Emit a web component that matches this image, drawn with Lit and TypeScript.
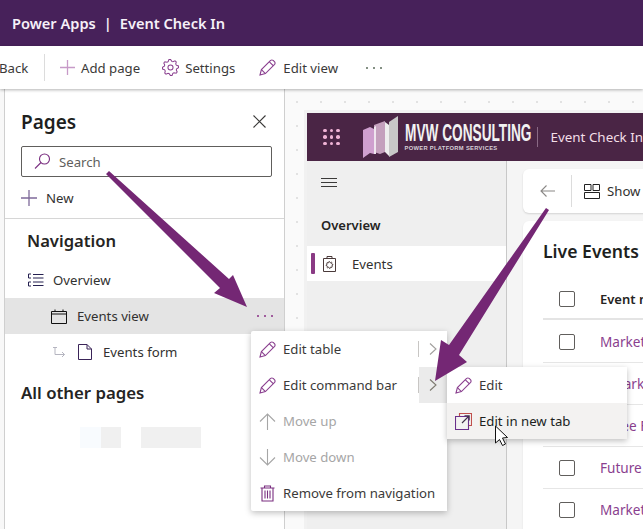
import { LitElement, html, css, svg } from "lit";
import { customElement } from "lit/decorators.js";

const P = "#8a3f8f";
const pencil = (c = P) => html`<svg class="ic" viewBox="0 0 17 17" fill="none" stroke=${c} stroke-width="1.1"><path d="M1 16 L2.4 10.6 L11.6 1.4 Q12.8 .5 14.2 1.4 L15.6 2.8 Q16.5 4.2 15.6 5.4 L6.4 14.6 Z"/><path d="M2.4 10.6 L6.4 14.6 M10.4 2.8 L14.2 6.6"/></svg>`;
const gearPath = (cx = 8, cy = 8, ro = 7.6, ri = 5.9) => {
  let d = "";
  const n = 8;
  for (let i = 0; i < n * 4; i++) {
    const a = (i / (n * 4)) * Math.PI * 2 - 0.19;
    const r = i % 4 < 2 ? ro : ri;
    d += `${i ? "L" : "M"}${(cx + r * Math.cos(a)).toFixed(2)} ${(cy + r * Math.sin(a)).toFixed(2)}`;
  }
  return d + "Z";
};
const chevron = (c: string) => html`<svg class="chev" viewBox="0 0 8 12" fill="none" stroke=${c} stroke-width="1.1"><path d="M1 .5 L7 6 L1 11.5"/></svg>`;
const arrowUp = html`<svg class="ic" viewBox="0 0 17 17" fill="none" stroke="#a6a6a6" stroke-width="1.1"><path d="M8.5 17 V1 M1 8.5 L8.5 1 L16 8.5"/></svg>`;
const arrowDown = html`<svg class="ic" viewBox="0 0 17 17" fill="none" stroke="#a6a6a6" stroke-width="1.1"><path d="M8.5 0 V16 M1 8.5 L8.5 16 L16 8.5"/></svg>`;
const trash = html`<svg class="ic" viewBox="0 0 17 17" fill="none" stroke="#7a2f80" stroke-width="1.1"><path d="M1.5 3 H15.5 M5.5 3 V1 H11.5 V3 M3 3 V16 H14 V3 M6 5.5 V13.5 M8.5 5.5 V13.5 M11 5.5 V13.5"/></svg>`;
const newTab = html`<svg class="ic" viewBox="0 0 17 17" fill="none" stroke-width="1.1"><path stroke="#c0504d" d="M4.5 3.5 V.5 H16.5 V12.5 H13.5"/><path stroke="#6a2f8a" d="M.5 3.5 H13.5 V16.5 H.5 Z"/><path stroke="#40304a" d="M7 10 L14 3 M9.5 2.8 H14.2 V7.5"/></svg>`;

const rows = ["Marketing", "1 Marketing", "Three Fe", "Future", "Marketing"];

@customElement("app-root")
export class AppRoot extends LitElement {
  static styles = css`
    :host { display: block; position: relative; width: 643px; height: 529px; overflow: hidden; background: #fff;
      font-family: "Noto Sans", "Open Sans", sans-serif; font-size: 13.2px; color: #323130; }
    svg { display: block; flex: none; }
    .ic { width: 17px; height: 17px; }
    .chev { width: 8px; height: 12px; }
    .top { height: 46px; background: #47215a; display: flex; align-items: center; padding-left: 12px; gap: 8px;
      color: #f6f0f8; font-weight: 600; font-size: 14.6px; white-space: pre; }
    .cmd { height: 43px; display: flex; align-items: center; position: relative; z-index: 2; background: #fff;
      box-shadow: 0 1px 3px rgba(0,0,0,.3); color: #3b3a39; }
    .cmd .back { width: 44px; height: 27px; display: flex; align-items: center; border-right: 1px solid #dcdcdc; text-indent: -1px; }
    .cmd .item { display: flex; align-items: center; gap: 6px; }
    .cmd .add { margin-left: 15px; }
    .cmd .set { margin-left: 22px; }
    .cmd .edit { margin-left: 24px; gap: 7px; }
    .cmd .more { margin-left: 28px; gap: 5px; }
    .cmd .more i { width: 2px; height: 2px; }
    .dots3 { display: flex; gap: 4.5px; }
    .dots3 i { width: 2.5px; height: 2.5px; border-radius: 50%; background: currentColor; }
    .body { height: 440px; display: flex; background: #f8f8f8; }
    .panel { width: 279px; margin-left: 4px; border-left: 1px solid #cfcfcf; border-right: 1px solid #cfcfcf; background: #fff; display: flex; flex-direction: column; flex: none; }
    .phead { height: 57px; padding: 8px 18px 0 16px; display: flex; align-items: center; justify-content: space-between; box-sizing: border-box; }
    .phead b { font-size: 19px; font-weight: 600; color: #201f1e; }
    .search { margin: 0 12px 0 16px; height: 31px; box-sizing: border-box; border: 1px solid #605e5c; border-radius: 2px; display: flex; align-items: center; padding-left: 12px; gap: 8px; color: #605e5c; }
    .new { height: 41px; padding-left: 16px; display: flex; align-items: center; gap: 9px; border-bottom: 1px solid #d6d6d6; color: #323130; }
    .sect { height: 42px; display: flex; align-items: center; font-size: 16.6px; font-weight: 600; color: #252423; padding-left: 22px; }
    .sect.other { height: 44px; padding-left: 16px; font-size: 16.8px; }
    .nrow { height: 36px; display: flex; align-items: center; box-sizing: border-box; color: #323130; }
    .nrow.a { padding-left: 23px; margin-top: 1px; gap: 9px; }
    .nrow.b { padding-left: 46px; gap: 10px; background: #e4e4e4; padding-right: 11px; }
    .nrow.b .dots3 { margin-left: auto; color: #8a2f86; }
    .nrow.c { padding-left: 48px; gap: 13px; }
    .nrow.c span { margin-left: -2px; }
    .blur { display: flex; padding: 13px 0 0 75px; gap: 20px; }
    .blur i { display: block; height: 21px; }
    .blur .x { width: 41px; background: linear-gradient(90deg, #f8fbfe 50%, #f0f0f0 50%); }
    .blur .y { width: 60px; background: #f0f0f0; }
    .canvas { flex: 1; min-width: 0; padding: 21px 0 0 19px; overflow: hidden;
      background-color: #fafafa; background-image: radial-gradient(#e2e2e2 1px, transparent 1.2px); background-size: 24px 24px; background-position: 0px 1px; }
    .frame { border: 3px solid #f1f1f1; border-right: none; border-bottom: none; height: 430px; display: flex; flex-direction: column; width: 340px; }
    .ahead { height: 48px; flex: none; background: #4a2545; display: flex; align-items: center; padding-left: 16px; color: #f3dfe8; }
    .waffle { display: grid; grid-template-columns: repeat(3, 3.5px); gap: 3px; margin-right: 22px; }
    .waffle i { width: 3.5px; height: 3.5px; border-radius: 50%; background: #f0b4d6; }
    .mark { width: 36px; height: 42px; margin: -1px 7px 0 0; }
    .brand { display: flex; flex-direction: column; width: 128px; color: #f2f2f2; padding-top: 1px; }
    .brand b { font-family: "Liberation Sans", sans-serif; font-size: 23px; line-height: 22px; font-weight: 700; white-space: nowrap; transform: scaleX(.594); transform-origin: left; width: 128px; }
    .brand small { font-size: 5.8px; font-family: "Liberation Sans", sans-serif; font-weight: 700; letter-spacing: .3px; line-height: 9px; white-space: nowrap; color: #d8d0d8; }
    .sep { width: 1px; height: 20px; background: #8a6a85; margin: 0 13px 0 4px; flex: none; }
    .apptitle { font-size: 13.4px; white-space: nowrap; }
    .amain { flex: 1; display: flex; min-height: 0; }
    .anav { width: 199px; flex: none; background: #efefef; border-right: 1px solid #c8c8c8; box-sizing: content-box; }
    .burger { padding: 17px 0 0 14px; height: 20px; }
    .ov { padding: 18px 0 0 14px; font-weight: 600; height: 30px; color: #252423; font-size: 13px; }
    .evt { height: 35px; background: #fff; display: flex; align-items: center; position: relative; padding-left: 16px; gap: 16px; color: #323130; }
    .evt::before { content: ""; position: absolute; left: 4px; top: 7px; bottom: 7px; width: 4px; background: #8a3a84; border-radius: 1px; }
    .acontent { flex: 1; background: #f5f5f5; padding: 8px 0 0 16px; min-width: 0; display: flex; flex-direction: column; gap: 8px; }
    .tools { height: 44px; flex: none; background: #fff; border-radius: 6px 0 0 6px; display: flex; align-items: center; box-shadow: 0 1px 2px rgba(0,0,0,.14); white-space: nowrap; }
    .tools .bk { width: 48px; height: 32px; display: flex; align-items: center; justify-content: center; border-right: 1px solid #dcdcdc; }
    .tools .gr { margin: 0 7px 0 12px; }
    .card { flex: 1; background: #fff; border-radius: 6px 0 0 0; padding: 0 0 0 20px; box-shadow: 0 1px 2px rgba(0,0,0,.1); white-space: nowrap; overflow: hidden; }
    .card h2 { margin: 0; height: 56px; display: flex; align-items: center; font-size: 17.6px; font-weight: 600; color: #201f1e; padding-top: 3px; box-sizing: border-box; }
    .row { height: 42px; display: flex; align-items: center; border-bottom: 1px solid #e6e6e6; box-sizing: border-box; color: #8a3f8f; font-size: 13.6px; }
    .row.h { color: #252423; font-weight: 600; height: 43px; padding-top: 2px; margin-bottom: 1px; font-size: 13px; border-bottom: 2px solid #e4e4e4; }
    .box { width: 16px; height: 16px; border: 1px solid #605e5c; border-radius: 2px; box-sizing: border-box; margin: 0 25px 0 16px; flex: none; background: #fff; }
    .menu { position: absolute; background: #fff; box-shadow: 0 2px 6px rgba(0,0,0,.25); z-index: 5; }
    .m1 { left: 251px; top: 331px; width: 196px; border-radius: 2px 0 0 2px; }
    .m2 { left: 447px; top: 367px; width: 180px; }
    .mi { height: 36px; display: flex; align-items: center; padding-left: 8px; gap: 7px; color: #3b3a39; white-space: nowrap; position: relative; }
    .mi.off { color: #a6a6a6; }
    .mi.hov { background: #f3f2f1; color: #201f1e; }
    .split { position: absolute; left: 168px; top: 0; bottom: 0; width: 28px; display: flex; align-items: center; justify-content: center; box-sizing: border-box; }
    .split.on { background: #ebebeb; }
    .split::before { content: ""; position: absolute; left: -1px; top: 10px; bottom: 10px; width: 1px; background: #c8c6c4; }
    .over { position: absolute; inset: 0; width: 643px; height: 529px; z-index: 8; pointer-events: none; }
  `;

  render() {
    return html`
      <div class="top"><span>Power Apps</span><span>|</span><span>Event Check In</span></div>
      <div class="cmd">
        <div class="back">Back</div>
        <div class="item add"><svg width="15" height="15" viewBox="0 0 15 15" stroke="#c79ac8" stroke-width="1.3"><path d="M7.5 0 V15 M0 7.5 H15"/></svg>Add page</div>
        <div class="item set"><svg class="ic" viewBox="0 0 16 16" fill="none" stroke=${P} stroke-width=".95"><path d=${gearPath()}/><circle cx="8" cy="8" r="2.4"/></svg>Settings</div>
        <div class="item edit">${pencil()}Edit view</div>
        <div class="more dots3" style="color:#5b6b5b"><i></i><i></i><i></i></div>
      </div>
      <div class="body">
        <div class="panel">
          <div class="phead"><b>Pages</b><svg width="13" height="13" viewBox="0 0 13 13" stroke="#3b3a39" stroke-width="1.1"><path d="M.5 .5 L12.5 12.5 M12.5 .5 L.5 12.5"/></svg></div>
          <div class="search"><svg width="17" height="17" viewBox="0 0 17 17" fill="none" stroke="#7a2f80" stroke-width="1.1"><circle cx="10.5" cy="6" r="5"/><path d="M7 9.5 L1 15.5"/></svg>Search</div>
          <div class="new"><svg width="16" height="16" viewBox="0 0 16 16" stroke="#7f6a9a" stroke-width="1.3"><path d="M8 0 V16 M0 8 H16"/></svg>New</div>
          <div class="sect">Navigation</div>
          <div class="nrow a"><svg width="16" height="14" viewBox="0 0 16 14" fill="none" stroke="#252050"><path d="M3 1 H.5 V5 H3 M3 9 H.5 V13 H3 M5 1.5 H15.5 M5 5 H15.5 M5 9 H15.5 M5 12.5 H15.5"/></svg>Overview</div>
          <div class="nrow b"><svg width="16" height="15" viewBox="0 0 16 15" fill="none" stroke="#111"><path d="M.5 2.5 H15.5 V14.5 H.5 Z M.5 5 H15.5 M4 .5 V2.5 M12 .5 V2.5"/></svg>Events view<div class="dots3"><i></i><i></i><i></i></div></div>
          <div class="nrow c"><svg width="12" height="10" viewBox="0 0 12 10" fill="none" stroke="#b5b5c0"><path d="M0 .5 H4 M2 .5 V7.5 H11.5 M9 5 L11.5 7.5 L9 10"/></svg><svg width="14" height="16" viewBox="0 0 14 16" fill="none" stroke="#3a2458"><path d="M.5 .5 H9 L13.5 5 V15.5 H.5 Z M9 .5 V5 H13.5"/></svg><span>Events form</span></div>
          <div class="sect other">All other pages</div>
          <div class="blur"><i class="x"></i><i class="y"></i></div>
        </div>
        <div class="canvas">
          <div class="frame">
            <div class="ahead">
              <div class="waffle">${Array.from({ length: 9 }, () => html`<i></i>`)}</div>
              <svg class="mark" viewBox="0 0 36 42">
                ${svg`<polygon points="1,14 8,11 12,13 12,38 8,37 1,42" fill="#cfa0cf"/><polygon points="12,9 23,5 23,36 18,38 12,36" fill="#c4a0bd"/><polygon points="12,11 14,10 14,38 12,38" fill="#efe6ef"/><polygon points="23,6 27,9 27,40 23,36" fill="#eee"/><polygon points="27,6 36,0 36,36 27,41" fill="#c8c8c8"/>`}
              </svg>
              <div class="brand"><b>MVW CONSULTING</b><small>POWER PLATFORM SERVICES</small></div>
              <div class="sep"></div>
              <div class="apptitle">Event Check In</div>
            </div>
            <div class="amain">
              <div class="anav">
                <div class="burger"><svg width="16" height="9" viewBox="0 0 16 9" stroke="#3b3a39"><path d="M0 .5 H16 M0 4.5 H16 M0 8.5 H16"/></svg></div>
                <div class="ov">Overview</div>
                <div class="evt"><svg width="13" height="16" viewBox="0 0 13 16" fill="none" stroke="#4a3a3a"><path d="M.5 2.5 H12.5 V15.5 H.5 Z M4 2.5 V.5 H9 V2.5"/><path d=${gearPath(6.5, 9, 3.4, 2.5)}/></svg>Events</div>
              </div>
              <div class="acontent">
                <div class="tools"><div class="bk"><svg width="15" height="12" viewBox="0 0 15 12" fill="none" stroke="#8a8886" stroke-width="1.1"><path d="M15 6 H1 M6.5 .5 L1 6 L6.5 11.5"/></svg></div><svg class="gr" width="16" height="15" viewBox="0 0 16 15" fill="none" stroke="#222"><path d="M.5 .5 H7 V6.5 H.5 Z M9 .5 H15.5 V6.5 H9 Z M.5 8.5 H15.5 V14.5 H.5 Z"/></svg>Show</div>
                <div class="card">
                  <h2>Live Events</h2>
                  <div class="row h"><span class="box"></span>Event name</div>
                  ${rows.map((t) => html`<div class="row"><span class="box"></span>${t}</div>`)}
                </div>
              </div>
            </div>
          </div>
        </div>
      </div>

      <div class="menu m1">
        <div class="mi">${pencil()}Edit table<div class="split">${chevron("#a19f9d")}</div></div>
        <div class="mi">${pencil()}Edit command bar<div class="split on">${chevron("#7d7a70")}</div></div>
        <div class="mi off">${arrowUp}Move up</div>
        <div class="mi off">${arrowDown}Move down</div>
        <div class="mi">${trash}Remove from navigation</div>
      </div>
      <div class="menu m2">
        <div class="mi">${pencil()}Edit</div>
        <div class="mi hov">${newTab}Edit in new tab</div>
      </div>

      <svg class="over" viewBox="0 0 643 529">
        ${svg`<polygon fill="#742774" points="106,174 109,171 229,279 233,275 247,307 214,293 220,288"/>
        <polygon fill="#742774" points="546,208 549,210 459,355 467,362 435,381 441,340 449,345"/>
        <polygon fill="#fff" stroke="#111" stroke-width="1" points="495.5,426 495.5,443 499.5,439.5 502.5,445.5 505.5,444 502.5,438 507.5,437.5"/>`}
      </svg>
    `;
  }
}
